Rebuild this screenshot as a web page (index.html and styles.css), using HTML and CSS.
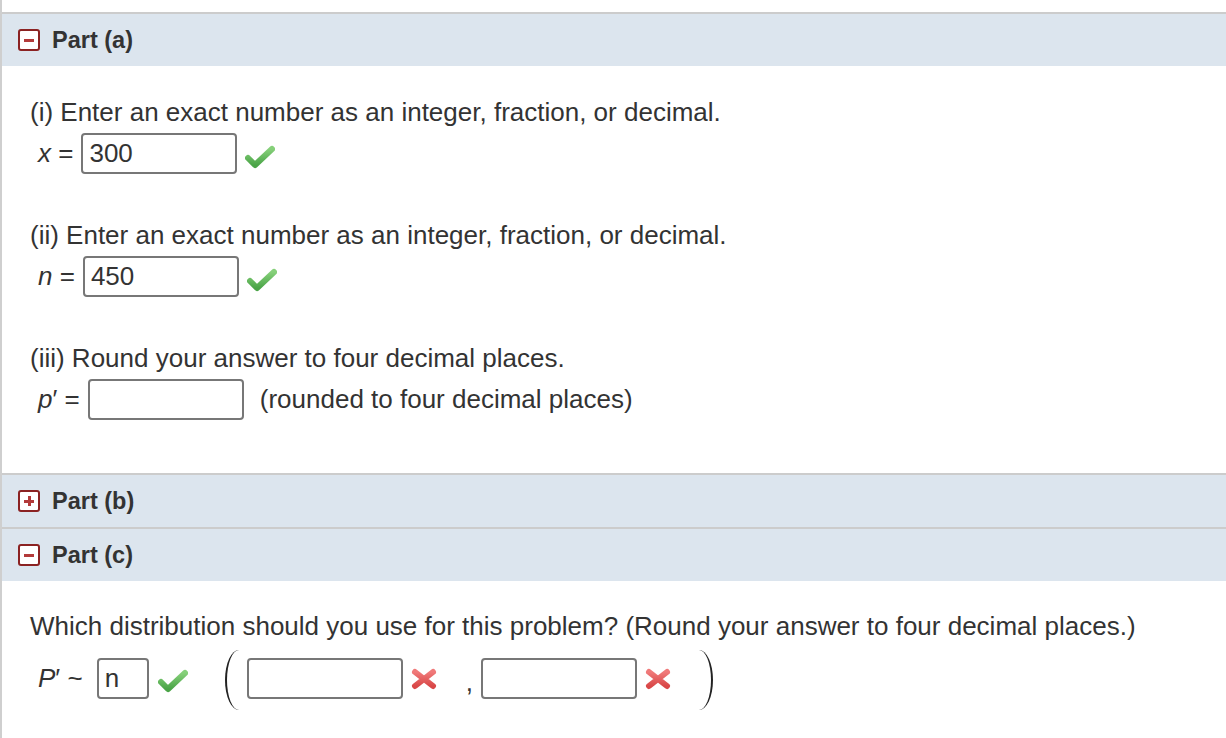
FILE: index.html
```html
<!DOCTYPE html>
<html>
<head>
<meta charset="utf-8">
<link rel="stylesheet" href="styles.css">
</head>
<body>
<svg class="defs" width="0" height="0"><defs><linearGradient id="g1" x1="0" y1="0" x2="0" y2="1"><stop offset="0" stop-color="#86d07a"/><stop offset="1" stop-color="#4aa447"/></linearGradient><linearGradient id="g2" x1="0" y1="0" x2="0" y2="1"><stop offset="0" stop-color="#f07a7a"/><stop offset="1" stop-color="#d94848"/></linearGradient></defs></svg>
<div class="page">
  <div class="part-header">
    <span class="toggle"><span class="bar"></span></span>
    <span class="part-title">Part (a)</span>
  </div>
  <div class="part-body body-a">
    <div class="question">
      <div class="prompt">(i) Enter an exact number as an integer, fraction, or decimal.</div>
      <div class="answer">
        <span class="label"><i>x</i> =</span>
        <span class="input">300</span>
        <svg class="check" viewBox="0 0 30 24" width="30" height="24"><path d="M3 13 L10 20 L27 4" fill="none" stroke="url(#g1)" stroke-width="6" stroke-linecap="round" stroke-linejoin="round"/></svg>
      </div>
    </div>
    <div class="question">
      <div class="prompt">(ii) Enter an exact number as an integer, fraction, or decimal.</div>
      <div class="answer">
        <span class="label"><i>n</i> =</span>
        <span class="input">450</span>
        <svg class="check" viewBox="0 0 30 24" width="30" height="24"><path d="M3 13 L10 20 L27 4" fill="none" stroke="url(#g1)" stroke-width="6" stroke-linecap="round" stroke-linejoin="round"/></svg>
      </div>
    </div>
    <div class="question">
      <div class="prompt">(iii) Round your answer to four decimal places.</div>
      <div class="answer">
        <span class="label"><i>p</i>′ =</span>
        <span class="input"></span>
        <span class="note">(rounded to four decimal places)</span>
      </div>
    </div>
  </div>
  <div class="part-header">
    <span class="toggle"><span class="bar"></span><span class="bar vbar"></span></span>
    <span class="part-title">Part (b)</span>
  </div>
  <div class="part-header">
    <span class="toggle"><span class="bar"></span></span>
    <span class="part-title">Part (c)</span>
  </div>
  <div class="part-body body-c">
    <div class="question">
      <div class="prompt">Which distribution should you use for this problem? (Round your answer to four decimal places.)</div>
      <div class="answer answer-c">
        <span class="label label-c"><i>P</i>′ ~</span>
        <span class="input input-n">n</span>
        <svg class="check check-c" viewBox="0 0 30 24" width="30" height="24"><path d="M3 13 L10 20 L27 4" fill="none" stroke="url(#g1)" stroke-width="6" stroke-linecap="round" stroke-linejoin="round"/></svg>
        <span class="paren paren-open"></span>
        <span class="input input-c"></span>
        <svg class="cross" viewBox="0 0 28 22" width="28" height="22"><path d="M5 4 L23 18 M23 4 L5 18" fill="none" stroke="url(#g2)" stroke-width="6" stroke-linecap="round"/></svg>
        <span class="comma">,</span>
        <span class="input input-c"></span>
        <svg class="cross" viewBox="0 0 28 22" width="28" height="22"><path d="M5 4 L23 18 M23 4 L5 18" fill="none" stroke="url(#g2)" stroke-width="6" stroke-linecap="round"/></svg>
        <span class="paren paren-close"></span>
      </div>
    </div>
  </div>
</div>
</body>
</html>
```

FILE: styles.css
```css
html, body {
  margin: 0;
  padding: 0;
  background: #fff;
}
body {
  font-family: "Liberation Sans", Arial, sans-serif;
  font-size: 26px;
  color: #333;
}
.defs {
  position: absolute;
  width: 0;
  height: 0;
}
.page {
  border-left: 2px solid #cfcfcf;
  padding-top: 12px;
  min-height: 726px;
}
.part-header {
  border-top: 2px solid #cccccc;
  background: #dce5ee;
  height: 52px;
  display: flex;
  align-items: center;
  padding-left: 16px;
}
.toggle {
  position: relative;
  width: 18px;
  height: 18px;
  border: 2px solid #8b2222;
  border-radius: 3px;
  background: #fff;
  display: flex;
  align-items: center;
  justify-content: center;
  margin-right: 12px;
}
.bar {
  position: absolute;
  width: 10px;
  height: 3px;
  background: #b33a3a;
}
.vbar {
  width: 3px;
  height: 10px;
}
.part-title {
  font-weight: bold;
  font-size: 23.5px;
  color: #333;
}
.part-body {
  padding-left: 28px;
}
.body-a {
  padding-top: 33px;
  padding-bottom: 53px;
  display: flex;
  flex-direction: column;
  gap: 48px;
}
.body-c {
  padding-top: 32px;
}
.prompt {
  line-height: 26px;
  height: 26px;
  margin-bottom: 8px;
  white-space: nowrap;
}
.answer {
  display: flex;
  align-items: center;
  height: 41px;
  padding-left: 8px;
}
.answer-c {
  height: 62px;
}
.label {
  white-space: nowrap;
  margin-right: 8px;
}
.label-c {
  margin-right: 14px;
}
.input {
  box-sizing: border-box;
  width: 156px;
  height: 41px;
  border: 2px solid #777;
  border-radius: 4px;
  padding-left: 6px;
  line-height: 37px;
  color: #333;
  background: #fff;
}
.check {
  margin-left: 8px;
  margin-top: 6px;
}
.note {
  margin-left: 16px;
}
.input-n {
  width: 52px;
}
.check-c {
  margin-left: 9px;
}
.paren {
  box-sizing: border-box;
  width: 14px;
  height: 60px;
  border: 0 solid #222;
  margin-top: 4px;
}
.paren-open {
  margin-left: 37px;
  margin-right: 8px;
  border-left-width: 2px;
  border-radius: 100% 0 0 100% / 50% 0 0 50%;
}
.paren-close {
  margin-left: 27px;
  border-right-width: 2px;
  border-radius: 0 100% 100% 0 / 0 50% 50% 0;
}
.cross {
  margin-left: 7px;
  margin-top: 2px;
}
.comma {
  margin-left: 28px;
  margin-right: 8px;
  margin-top: 8px;
}
```
